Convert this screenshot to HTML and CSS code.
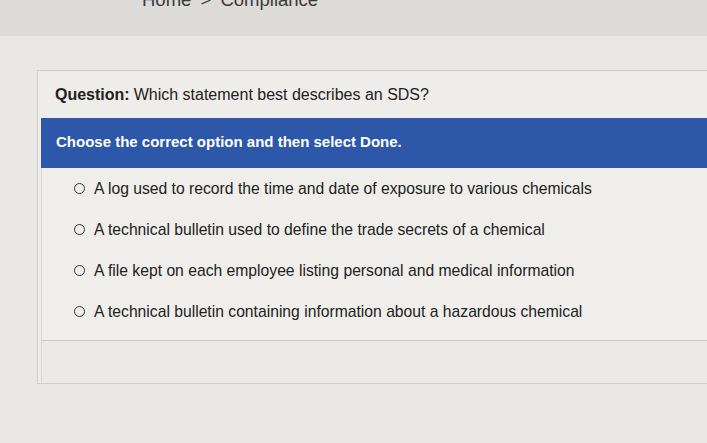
FILE: index.html
```html
<!DOCTYPE html>
<html>
<head>
<meta charset="utf-8">
<link rel="stylesheet" href="styles.css">
</head>
<body>
<header class="topbar">
  <div class="crumbs">Home <span class="sep">&gt;</span> Compliance</div>
</header>
<main class="page">
  <section class="card">
    <div class="question"><b>Question:</b> Which statement best describes an SDS?</div>
    <div class="prompt">Choose the correct option and then select <b>Done.</b></div>
    <ul class="options">
      <li class="option"><span class="radio"></span><span class="label">A log used to record the time and date of exposure to various chemicals</span></li>
      <li class="option"><span class="radio"></span><span class="label">A technical bulletin used to define the trade secrets of a chemical</span></li>
      <li class="option"><span class="radio"></span><span class="label">A file kept on each employee listing personal and medical information</span></li>
      <li class="option"><span class="radio"></span><span class="label">A technical bulletin containing information about a hazardous chemical</span></li>
    </ul>
    <div class="footer"></div>
  </section>
</main>
</body>
</html>
```
FILE: styles.css
```css
html, body {
  margin: 0;
  padding: 0;
}
body {
  width: 707px;
  height: 443px;
  overflow: hidden;
  background: #e9e8e4;
  font-family: "Liberation Sans", Arial, sans-serif;
  color: #222;
}
.topbar {
  height: 36px;
  background: #dcdbd8;
  overflow: hidden;
}
.crumbs {
  margin-top: -11px;
  padding-left: 142px;
  font-size: 18.5px;
  line-height: 22px;
  color: #3a3a3a;
}
.crumbs .sep {
  padding: 0 4px;
}
.page {
  padding: 34px 0 0 37px;
}
.card {
  border: 1px solid #cfcecb;
  border-right: none;
  background: #eeede9;
}
.question {
  height: 47px;
  padding-left: 17px;
  display: flex;
  align-items: center;
  font-size: 16px;
  color: #222;
}
.question b {
  margin-right: 4px;
}
.prompt {
  margin-left: 3px;
  height: 46px;
  padding-bottom: 6px;
  background: #2d57a9;
  color: #fff;
  display: flex;
  align-items: center;
  padding-left: 15px;
  font-size: 15px;
  font-weight: bold;
}
.prompt b {
  margin-left: 4px;
}
.options {
  list-style: none;
  margin: 0;
  padding: 0 0 8px 0;
  border-left: 1px solid #d6d5d2;
  margin-left: 3px;
  background: #efeeea;
}
.option {
  height: 41px;
  display: flex;
  align-items: center;
  padding-left: 32px;
  font-size: 15.7px;
}
.option:first-child {
  margin-top: -2px;
}
.radio {
  width: 9px;
  height: 9px;
  border: 1.5px solid #333;
  border-radius: 50%;
  margin-right: 9px;
  flex: none;
}
.footer {
  height: 42px;
  margin-left: 3px;
  border-top: 1px solid #c9c8c5;
  border-left: 1px solid #d6d5d2;
  background: #eceae6;
}
```
